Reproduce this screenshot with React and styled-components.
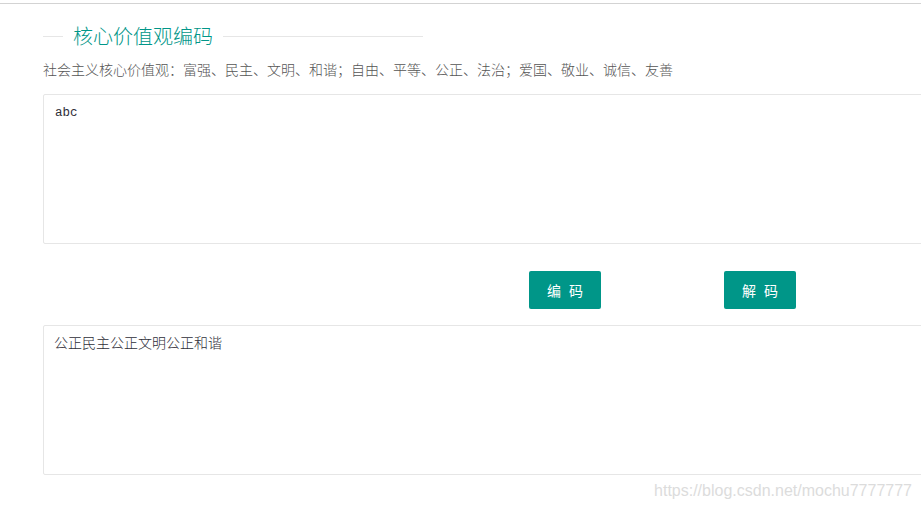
import React from "react";
import styled, { createGlobalStyle } from "styled-components";

const GlobalStyle = createGlobalStyle`
  html, body {
    margin: 0;
    padding: 0;
    background: #fff;
    overflow: hidden;
  }
  body {
    font-family: "Noto Sans CJK SC", "Noto Sans", sans-serif;
    color: #333;
  }
`;

const Page = styled.div`
  position: relative;
  width: 921px;
  height: 508px;
  padding-top: 3px;
  box-sizing: border-box;
  overflow: hidden;
`;

const TopRule = styled.div`
  height: 0;
  border-top: 1px solid #d3d3d3;
`;

const Content = styled.div`
  padding-left: 43px;
`;

const TitleRow = styled.div`
  display: flex;
  align-items: center;
  width: 380px;
  height: 24px;
  margin-top: 20px;
`;

const Rule = styled.span`
  display: block;
  height: 1px;
  background: #e6e6e6;
  width: ${(p) => (p.$grow ? "auto" : "20px")};
  flex: ${(p) => (p.$grow ? "1" : "none")};
`;

const Title = styled.h2`
  margin: 0;
  padding: 0 10px;
  font-size: 20px;
  font-weight: 300;
  line-height: 24px;
  color: #009688;
`;

const Subtitle = styled.p`
  margin: 11px 0 0;
  font-size: 14px;
  font-weight: 300;
  line-height: 20px;
  color: #555;
  white-space: nowrap;
`;

const Area = styled.textarea`
  display: block;
  width: 1100px;
  height: 150px;
  box-sizing: border-box;
  margin: ${(p) => p.$top}px 0 0;
  padding: ${(p) => (p.$mono ? "8px 11px 4px" : "6px 10px")};
  border: 1px solid #e6e6e6;
  border-radius: 2px;
  resize: none;
  outline: none;
  line-height: 20px;
  color: #2e2e38;
  background: #fff;
  font-family: ${(p) =>
    p.$mono
      ? '"Liberation Mono", "DejaVu Sans Mono", monospace'
      : '"Noto Sans CJK SC", "Noto Sans", sans-serif'};
  font-size: ${(p) => (p.$mono ? "12.5px" : "14px")};
  font-weight: ${(p) => (p.$mono ? 400 : 300)};
`;

const ButtonRow = styled.div`
  display: flex;
  gap: 123px;
  margin-top: 27px;
  padding-left: 486px;
`;

const Button = styled.button`
  height: 38px;
  width: 72px;
  padding: 0;
  border: none;
  border-radius: 2px;
  background: #009688;
  color: #fff;
  font-family: "Noto Sans CJK SC", "Noto Sans", sans-serif;
  font-size: 14px;
  letter-spacing: 8px;
  text-indent: 8px;
  cursor: pointer;
`;

const Watermark = styled.div`
  position: absolute;
  right: 9px;
  bottom: 8px;
  font-family: "Liberation Sans", Arial, sans-serif;
  font-size: 16px;
  color: #dcdcdc;
  pointer-events: none;
`;

const App = () => {
  return (
    <>
      <GlobalStyle />
      <Page>
        <TopRule />
        <Content>
          <TitleRow>
            <Rule />
            <Title>核心价值观编码</Title>
            <Rule $grow />
          </TitleRow>
          <Subtitle>
            社会主义核心价值观：富强、民主、文明、和谐；自由、平等、公正、法治；爱国、敬业、诚信、友善
          </Subtitle>
          <Area $top={15} $mono readOnly value="abc" />
          <ButtonRow>
            <Button>编码</Button>
            <Button>解码</Button>
          </ButtonRow>
          <Area $top={16} readOnly value="公正民主公正文明公正和谐" />
        </Content>
        <Watermark>https://blog.csdn.net/mochu7777777</Watermark>
      </Page>
    </>
  );
};

export default App;
